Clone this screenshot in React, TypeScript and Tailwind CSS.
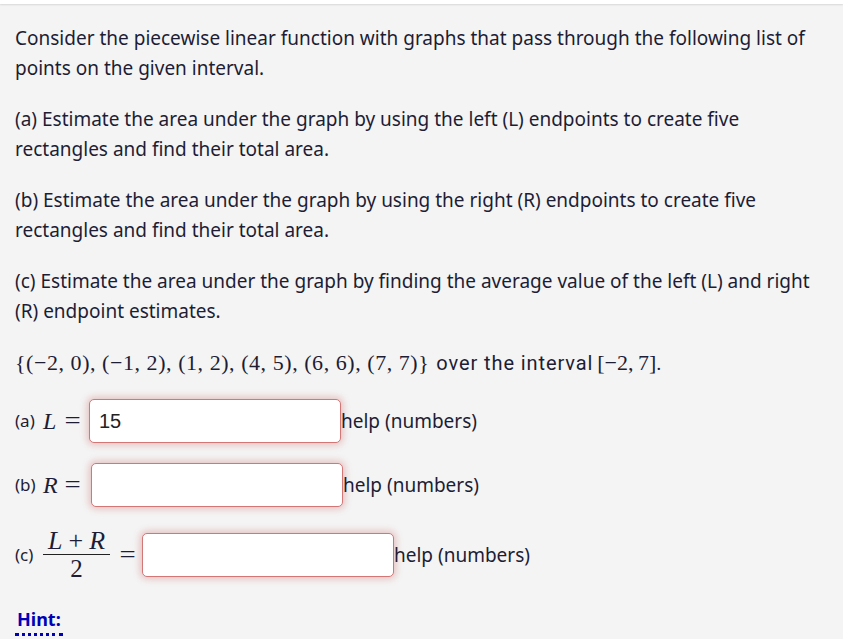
import React from "react";

function Input({ value }: { value?: string }) {
  return (
    <div className="w-[252px] h-[44px] bg-white border border-[#d27676] rounded-[5px] shadow-[0_0_7px_2px_rgba(200,80,80,0.32)] flex items-center px-[9px] text-[20px] text-[#222] font-['Liberation_Sans',Arial,sans-serif] shrink-0">
      {value}
    </div>
  );
}

function Help() {
  return <span className="text-[19px] leading-[30px] text-[#1d1d35] font-['Noto_Sans',sans-serif]">help (numbers)</span>;
}

function Eq() {
  return <span className="font-['Liberation_Serif',serif] text-[25px] leading-[30px] inline-block w-[17px] text-center scale-x-[1.15]">=</span>;
}

export default function App() {
  return (
    <div className="min-h-[639px] bg-[#f4f4f4] text-[#1d1d35]">
      <div className="h-[4px] bg-white shadow-[0_1px_2px_rgba(0,0,0,0.12)]" />
      <div className="pl-[15px] pt-[19px] font-['Noto_Sans',sans-serif] text-[19px] leading-[30px] whitespace-nowrap">
        <p className="mb-[21px]">
          Consider the piecewise linear function with graphs that pass through the following list of
          <br />
          points on the given interval.
        </p>
        <p className="mb-[21px]">
          (a) Estimate the area under the graph by using the left (L) endpoints to create five
          <br />
          rectangles and find their total area.
        </p>
        <p className="mb-[21px]">
          (b) Estimate the area under the graph by using the right (R) endpoints to create five
          <br />
          rectangles and find their total area.
        </p>
        <p className="mb-[22px]">
          (c) Estimate the area under the graph by finding the average value of the left (L) and right
          <br />
          (R) endpoint estimates.
        </p>
        <div className="h-[30px] flex items-center">
          <span className="font-['Liberation_Serif',serif] text-[22px] tracking-[0.55px]">
            {"{(−2, 0), (−1, 2), (1, 2), (4, 5), (6, 6), (7, 7)}"}
          </span>
          <span className="font-['Roboto',sans-serif] text-[20px] tracking-[0.9px] ml-[7px]">over the interval</span>
          <span className="font-['Liberation_Serif',serif] text-[22px] ml-[4px]">{"[−2,\u20097]"}</span>
          <span className="font-['Roboto',sans-serif] text-[20px]">.</span>
        </div>

        <div className="mt-[21px] flex items-center h-[44px]">
          <span className="text-[17px] w-[22px]">(a)</span>
          <span className="font-['Liberation_Serif',serif] italic text-[24px] ml-[6px] w-[16px]">L</span>
          <span className="ml-[5px] mr-[8px]"><Eq /></span>
          <Input value="15" />
          <Help />
        </div>

        <div className="mt-[20px] flex items-center h-[44px]">
          <span className="text-[17px] w-[22px]">(b)</span>
          <span className="font-['Liberation_Serif',serif] italic text-[24px] ml-[6px] w-[18px]">R</span>
          <span className="ml-[3px] mr-[10px]"><Eq /></span>
          <Input />
          <Help />
        </div>

        <div className="mt-[21px] flex items-center h-[54px]">
          <span className="text-[17px] w-[22px]">(c)</span>
          <span className="inline-flex flex-col items-center ml-[6px] font-['Liberation_Serif',serif] text-[26px] leading-[24px] w-[67px]">
            <span className="flex items-center pb-[1px]">
              <i>L</i>
              <span className="mx-[6px]">+</span>
              <i>R</i>
            </span>
            <span className="w-full border-t-[1.5px] border-[#222] pt-[2px] text-center text-[25px]">2</span>
          </span>
          <span className="ml-[9px] mr-[6px]"><Eq /></span>
          <Input />
          <Help />
        </div>

        <div className="mt-[22px]">
          <span className="font-bold text-[18px] text-[#0000b8] pb-[1px] border-b-[3px] border-dotted border-[#0000b8] inline-block leading-[26px] px-[2px]">
            Hint:
          </span>
        </div>
      </div>
    </div>
  );
}
